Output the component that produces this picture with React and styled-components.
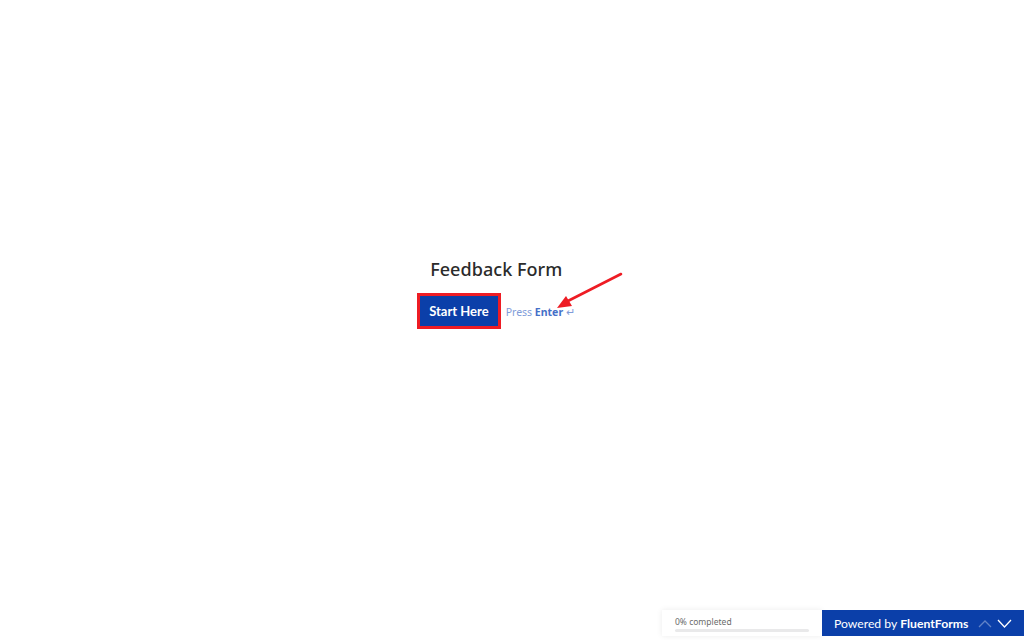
import React from 'react';
import styled, { createGlobalStyle } from 'styled-components';

const GlobalStyle = createGlobalStyle`
    html, body {
        margin: 0;
        padding: 0;
        background: #ffffff;
    }
    body {
        font-family: 'Noto Sans', 'Open Sans', sans-serif;
    }
`;

const Page = styled.div`
    position: relative;
    min-height: 100vh;
    display: flex;
    flex-direction: column;
    box-sizing: border-box;
    padding-bottom: 4px;
`;

const Main = styled.main`
    flex: 1;
    display: flex;
    justify-content: center;
    padding: 257px 32px 0 0;
`;

const Welcome = styled.section`
    display: flex;
    flex-direction: column;
`;

const Title = styled.h1`
    margin: 0 0 12px 13px;
    font-size: 18px;
    line-height: 24px;
    font-weight: 500;
    color: #2b2b2b;
    letter-spacing: 0.05px;
`;

const ActionRow = styled.div`
    display: flex;
    align-items: center;
    gap: 5px;
`;

const StartButton = styled.button`
    height: 36px;
    padding: 0 9px;
    border: 3px solid #ee1c24;
    background: #0b3fa9;
    color: #ffffff;
    font-family: 'Lato', sans-serif;
    font-size: 13px;
    font-weight: 700;
    cursor: pointer;
`;

const Hint = styled.span`
    font-size: 10.5px;
    color: #7f9cd9;
    padding-top: 1px;

    b {
        color: #4570c8;
        font-weight: 700;
    }
`;

const Arrow = styled.svg`
    position: absolute;
    left: 550px;
    top: 268px;
`;

const Footer = styled.footer`
    display: flex;
    justify-content: flex-end;
    height: 26px;
`;

const Progress = styled.div`
    width: 160px;
    box-sizing: border-box;
    padding: 6px 13px 0 13px;
    background: #ffffff;
    box-shadow: 0 0 6px rgba(0, 0, 0, 0.08);
`;

const ProgressText = styled.div`
    font-size: 8.5px;
    line-height: 11px;
    color: #6b6b6b;
`;

const Track = styled.div`
    margin-top: 2px;
    height: 3px;
    border-radius: 2px;
    background: #e9e9ea;
`;

const Brand = styled.div`
    width: 202px;
    box-sizing: border-box;
    padding: 0 0 0 12px;
    display: flex;
    align-items: center;
    background: #0b3fa9;
    color: #ffffff;
    font-family: 'Lato', sans-serif;
    font-size: 12.2px;

    b {
        font-weight: 700;
        margin-left: 3px;
    }
`;

const Nav = styled.div`
    display: flex;
    align-items: center;
    gap: 5px;
    margin-left: 10px;
`;

const Chevron = styled.svg`
    opacity: ${p => (p.$disabled ? 0.35 : 1)};
`;

function App() {
    return (
        <Page>
            <GlobalStyle />
            <Main>
                <Welcome>
                    <Title>Feedback Form</Title>
                    <ActionRow>
                        <StartButton>Start Here</StartButton>
                        <Hint>Press <b>Enter</b> ↵</Hint>
                    </ActionRow>
                </Welcome>
            </Main>
            <Arrow width="80" height="46" viewBox="0 0 80 46">
                <line x1="71" y1="6" x2="14" y2="35" stroke="#ee1c24" strokeWidth="2.6" strokeLinecap="round" />
                <polygon points="7,40 16,28 22,38" fill="#ee1c24" />
            </Arrow>
            <Footer>
                <Progress>
                    <ProgressText>0% completed</ProgressText>
                    <Track />
                </Progress>
                <Brand>
                    Powered by<b>FluentForms</b>
                    <Nav>
                        <Chevron $disabled width="14" height="9" viewBox="0 0 14 9">
                            <polyline points="1,8 7,2 13,8" fill="none" stroke="#fff" strokeWidth="1.3" />
                        </Chevron>
                        <Chevron width="15" height="9" viewBox="0 0 15 9">
                            <polyline points="1,1 7.5,8 14,1" fill="none" stroke="#fff" strokeWidth="1.3" />
                        </Chevron>
                    </Nav>
                </Brand>
            </Footer>
        </Page>
    );
}

export default App;
